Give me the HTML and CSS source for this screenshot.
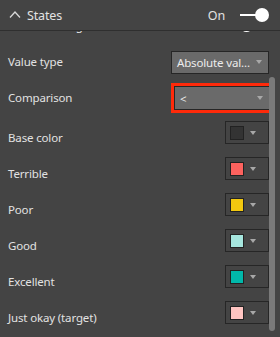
FILE: index.html
```html
<!DOCTYPE html>
<html lang="en">
<head>
    <meta charset="UTF-8">
    <meta name="viewport" content="width=device-width, initial-scale=1.0">
    <title>States</title>
    <link rel="stylesheet" href="styles.css">
</head>
<body>
    <div class="header">
        <div class="header-title">
            <svg class="chevron" width="12" height="8" viewBox="0 0 12 8">
                <path d="M1 7.5 L6 2 L11 7.5" fill="none" stroke="#d8d8d8" stroke-width="1.3"/>
            </svg>
            <span>States</span>
        </div>
        <div class="header-toggle">
            <span>On</span>
            <div class="toggle on"><div class="knob"></div></div>
        </div>
    </div>

    <div class="panel">
        <div class="list">
            <div class="row peek">
                <span class="label">Show heading</span>
                <div class="toggle off"><div class="knob"></div></div>
            </div>

            <div class="row">
                <span class="label">Value type</span>
                <div class="dropdown">
                    <span>Absolute val...</span>
                    <span class="arrow"></span>
                </div>
            </div>

            <div class="row">
                <span class="label">Comparison</span>
                <div class="dropdown highlighted">
                    <span>&lt;</span>
                    <span class="arrow"></span>
                </div>
            </div>

            <div class="row picker-row">
                <span class="label">Base color</span>
                <div class="picker"><span class="swatch" style="background:#333333"></span><span class="arrow"></span></div>
            </div>
            <div class="row picker-row">
                <span class="label">Terrible</span>
                <div class="picker"><span class="swatch" style="background:#fd625e"></span><span class="arrow"></span></div>
            </div>
            <div class="row picker-row">
                <span class="label">Poor</span>
                <div class="picker"><span class="swatch" style="background:#f2c80f"></span><span class="arrow"></span></div>
            </div>
            <div class="row picker-row">
                <span class="label">Good</span>
                <div class="picker"><span class="swatch" style="background:#a6e6de"></span><span class="arrow"></span></div>
            </div>
            <div class="row picker-row">
                <span class="label">Excellent</span>
                <div class="picker"><span class="swatch" style="background:#01b8aa"></span><span class="arrow"></span></div>
            </div>
            <div class="row picker-row">
                <span class="label">Just okay (target)</span>
                <div class="picker"><span class="swatch" style="background:#ffc5c2"></span><span class="arrow"></span></div>
            </div>
        </div>
        <div class="scrollbar"></div>
    </div>
</body>
</html>
```

FILE: styles.css
```css
/* format pane, dark theme */
body {
    margin: 0;
    background-color: #444444;
    color: #e2e2e2;
    font-family: 'Noto Sans', 'Open Sans', sans-serif;
    font-size: 11.5px;
    letter-spacing: -0.15px;
    width: 280px;
    height: 337px;
    overflow: hidden;
}

.header {
    height: 30px;
    display: flex;
    justify-content: space-between;
    align-items: center;
    padding: 0 11px 0 9px;
    border-bottom: 1px solid #2f2f2f;
    position: relative;
    z-index: 1;
    background-color: #444444;
}

.header-title {
    display: flex;
    align-items: center;
    gap: 6px;
    font-size: 12.5px;
}

.chevron {
    margin-top: -2px;
}

.header-toggle {
    display: flex;
    align-items: center;
    gap: 15px;
    font-size: 12.5px;
}

.toggle {
    width: 29px;
    height: 14px;
    position: relative;
}

.toggle.on::before {
    content: "";
    position: absolute;
    left: 0;
    right: 8px;
    top: 6px;
    height: 2px;
    background-color: #ffffff;
}

.toggle .knob {
    position: absolute;
    top: 0;
    width: 14px;
    height: 14px;
    border-radius: 50%;
    box-sizing: border-box;
}

.toggle.on .knob {
    right: 0;
    background-color: #ffffff;
}

.toggle.off .knob {
    left: 0;
    border: 2px solid #ffffff;
    width: 13px;
    height: 13px;
}

.panel {
    height: 306px;
    overflow: hidden;
    position: relative;
}

.list {
    margin-top: -23px;
}

.row {
    height: 36px;
    display: flex;
    justify-content: space-between;
    align-items: center;
    padding: 0 11px 0 8px;
}

.label {
    line-height: 16px;
}

.picker-row {
    align-items: flex-start;
}

.picker-row .label {
    margin-top: 14px;
}

.dropdown {
    width: 98px;
    height: 23px;
    box-sizing: border-box;
    background-color: #6a6a6a;
    border: 1px solid #262626;
    display: flex;
    justify-content: space-between;
    align-items: center;
    padding: 0 6px 0 5px;
    color: #ececec;
    white-space: nowrap;
}

.dropdown.highlighted {
    width: 96px;
    height: 24px;
    margin-right: -1px;
    position: relative;
}

.dropdown.highlighted::after {
    content: "";
    position: absolute;
    top: -4px;
    left: -4px;
    right: -5px;
    bottom: -4px;
    border: 3px solid #ff2a0a;
}

.arrow {
    flex-shrink: 0;
    width: 0;
    height: 0;
    border-left: 3.5px solid transparent;
    border-right: 3.5px solid transparent;
    border-top: 4px solid #a8a8a8;
}

.picker {
    margin-top: 5px;
    width: 44px;
    height: 23px;
    box-sizing: border-box;
    border: 1px solid #262626;
    display: flex;
    align-items: center;
    gap: 6px;
    padding-left: 4px;
}

.swatch {
    width: 14px;
    height: 14px;
    box-sizing: border-box;
    border: 1px solid #222222;
}

.scrollbar {
    position: absolute;
    right: 5px;
    top: 46px;
    width: 6px;
    height: 254px;
    border-radius: 3px;
    background-color: #7a7a7a;
}
```
